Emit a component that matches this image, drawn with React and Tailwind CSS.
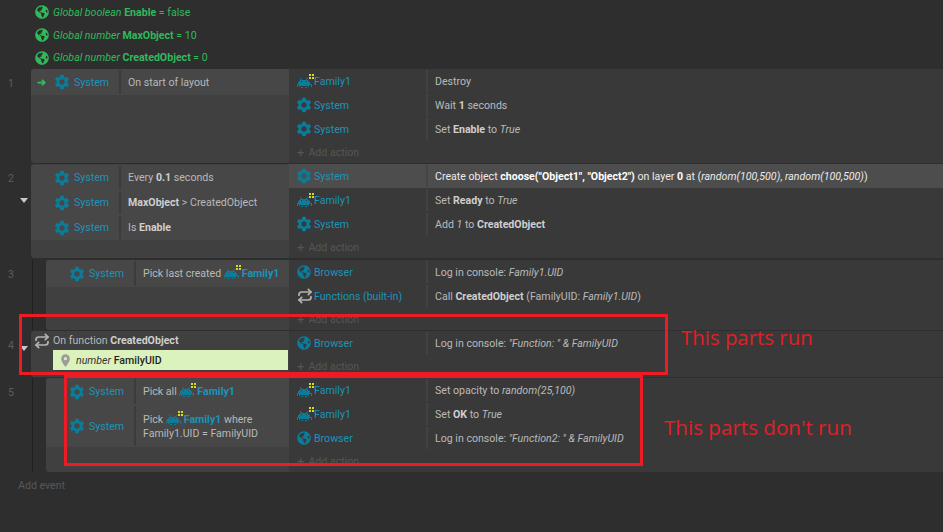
import React from "react";
import { MdSettings, MdPlace } from "react-icons/md";
import { FaGlobeAmericas } from "react-icons/fa";
import { Repeat } from "lucide-react";

const Gear = () => <MdSettings className="w-[18px] h-[18px] -ml-[2px] text-[#0b7c99] shrink-0" />;
const Globe = ({ cls = "text-[#0b7c99]" }) => <FaGlobeAmericas className={"w-[14px] h-[14px] shrink-0 " + cls} />;
const Loop = ({ cls = "w-[16px] h-[16px] text-[#b4b4b4]" }) => <Repeat strokeWidth={2.6} className={"shrink-0 " + cls} />;

const Invader = () => (
  <svg width="17" height="14" viewBox="0 0 17 14" className="shrink-0" shapeRendering="crispEdges">
    <g fill="#0b7c99">
      <rect x="3" y="4" width="1" height="1" />
      <rect x="10" y="4" width="1" height="1" />
      <rect x="4" y="5" width="1" height="1" />
      <rect x="9" y="5" width="1" height="1" />
      <rect x="3" y="6" width="8" height="1" />
      <rect x="2" y="7" width="2" height="1" />
      <rect x="5" y="7" width="4" height="1" />
      <rect x="10" y="7" width="2" height="1" />
      <rect x="1" y="8" width="12" height="2" />
      <rect x="0" y="10" width="15" height="1" />
      <rect x="0" y="11" width="1" height="2" />
      <rect x="2" y="11" width="10" height="1" />
      <rect x="14" y="11" width="1" height="2" />
      <rect x="2" y="12" width="1" height="1" />
      <rect x="11" y="12" width="1" height="1" />
      <rect x="4" y="13" width="2" height="1" />
      <rect x="8" y="13" width="2" height="1" />
    </g>
    <g fill="#d6dc1e">
      <rect x="12" y="0" width="2" height="2" />
      <rect x="15" y="0" width="2" height="2" />
      <rect x="12" y="3" width="2" height="2" />
      <rect x="15" y="3" width="2" height="2" />
    </g>
  </svg>
);

const Obj = ({ name }) => <span className="text-[#1a94bb] pt-px">{name}</span>;
const FamilyInline = () => (
  <span className="inline-flex items-center gap-[1px] align-[-2px] font-bold text-[#1a94bb]">
    <span className="-mt-[4px]"><Invader /></span>
    <span>Family1</span>
  </span>
);

const B = ({ children }) => <b className="font-bold text-[#cfcfcf]">{children}</b>;
const I = ({ children }) => <i className="italic">{children}</i>;

const Global = ({ kind, name, value }) => (
  <div className="flex-1 flex items-center pl-[35px] gap-[4px] text-[#2fba5b]">
    <Globe cls="text-[#2fba5b]" />
    <span className="whitespace-pre pt-px">
      <i className="italic">Global {kind} </i>
      <b className="font-bold">{name}</b> = {value}
    </span>
  </div>
);

const Action = ({ icon, name, children, hi }) => (
  <div className={"h-6 flex items-center " + (hi ? "bg-[#4d4d4d] text-[#ececec]" : "")}>
    <div className="w-[137px] flex items-center pl-2 gap-[1px] shrink-0">
      <span className="w-[16px] flex items-center shrink-0">{icon}</span>
      <Obj name={name} />
    </div>
    <div className={"h-[22px] w-[2px] shrink-0 " + (hi ? "bg-[#444]" : "bg-[#424242]")} />
    <div className="pl-[7px] pt-px whitespace-pre">{children}</div>
  </div>
);

const AddAction = () => (
  <div className="h-[22px] flex items-center pl-2 text-[#565656] gap-[4px]">
    <span className="text-[13px] leading-none">+</span>
    <span className="pt-px">Add action</span>
  </div>
);

const Cond = ({ first, system = "System", h = 25, children }) => (
  <div className="flex items-center bg-[#474747]" style={{ height: h }}>
    <div className="w-[88px] shrink-0 flex items-center relative pl-6 gap-[3px]">
      {first && <span className="absolute left-[6px] top-1/2 -translate-y-1/2 text-[#2fba5b] text-[11px] leading-none font-bold">➜</span>}
      <Gear />
      <Obj name={system} />
    </div>
    <div className="w-[2px] shrink-0 bg-[#3b3b3b]" style={{ height: h - 2 }} />
    <div className="pl-[7px] pt-px leading-[14px] whitespace-pre">{children}</div>
  </div>
);

const Event = ({ num, sub, tri, conds, actions }) => (
  <div className="flex">
    <div className={"relative shrink-0 " + (sub ? "w-[46px]" : "w-[31px]")}>
      <span className="absolute left-[8px] top-[8px] text-[#5c5c5c]">{num}</span>
      {sub && <div className="absolute left-[32px] top-0 bottom-0 w-px bg-[#202020]" />}
      {tri && (
        <div
          className="absolute left-[20px] w-0 h-0 border-l-[4px] border-r-[4px] border-t-[5px] border-l-transparent border-r-transparent border-t-[#c8c8c8]"
          style={{ top: tri }}
        />
      )}
    </div>
    <div className="shrink-0 bg-[#404040] rounded-l-[3px] overflow-hidden" style={{ width: sub ? 243 : 258 }}>
      {conds}
    </div>
    <div className="flex-1 bg-[#393939]">
      {actions}
      <AddAction />
    </div>
  </div>
);

export default function App() {
  return (
    <div
      className="relative w-[943px] h-[532px] overflow-hidden bg-[#2e2e2e] text-[10.6px] leading-[14px] text-[#b9b9b9]"
      style={{ fontFamily: 'Roboto, "Open Sans", sans-serif' }}
    >
      <div className="h-[69px] pt-px flex flex-col">
        <Global kind="boolean" name="Enable" value="false" />
        <Global kind="number" name="MaxObject" value="10" />
        <Global kind="number" name="CreatedObject" value="0" />
      </div>

      <div className="flex flex-col gap-px">
        <Event
          num="1"
          conds={<Cond first h={26}>On start of layout</Cond>}
          actions={
            <>
              <Action icon={<Invader />} name="Family1">Destroy</Action>
              <Action icon={<Gear />} name="System">Wait <B>1</B> seconds</Action>
              <Action icon={<Gear />} name="System">Set <B>Enable</B> to <I>True</I></Action>
            </>
          }
        />
        <Event
          num="2"
          tri={34}
          conds={
            <div className="pt-px">
              <Cond>Every <B>0.1</B> seconds</Cond>
              <Cond><B>MaxObject</B> &gt; CreatedObject</Cond>
              <Cond>Is <B>Enable</B></Cond>
            </div>
          }
          actions={
            <>
              <Action hi icon={<Gear />} name="System">Create object <b className="font-bold text-white">choose("Object1", "Object2")</b> on layer <b className="font-bold text-white">0</b> at (<I>random(100,500)</I>, <I>random(100,500)</I>)</Action>
              <Action icon={<Invader />} name="Family1">Set <B>Ready</B> to <I>True</I></Action>
              <Action icon={<Gear />} name="System">Add <I>1</I> to <B>CreatedObject</B></Action>
            </>
          }
        />
        <div className="mt-px">
          <Event
            num="3"
            sub
            conds={<Cond h={27}>Pick last created <FamilyInline /></Cond>}
            actions={
              <>
                <Action icon={<Globe />} name="Browser">Log in console: <I>Family1.UID</I></Action>
                <Action icon={<Loop />} name="Functions (built-in)">Call <B>CreatedObject</B> (FamilyUID: <I>Family1.UID</I>)</Action>
              </>
            }
          />
        </div>
        <Event
          num="4"
          tri={15}
          conds={
            <div className="h-full flex flex-col">
              <div className="h-[19px] flex items-center pl-[3px] gap-[3px]">
                <Loop />
                <span className="pt-px">On function <B>CreatedObject</B></span>
              </div>
              <div className="ml-[22px] mr-px h-5 bg-[#dcf2bc] flex items-center pl-[6px] gap-[3px] text-[#1f1f1f]">
                <MdPlace className="w-[15px] h-[15px] text-[#9c9c9c] -ml-[1px]" />
                <span className="pt-px"><i className="italic text-[#333]">number</i> <span className="font-medium">FamilyUID</span></span>
              </div>
            </div>
          }
          actions={<Action icon={<Globe />} name="Browser">Log in console: <I>"Function: " &amp; FamilyUID</I></Action>}
        />
        <Event
          num="5"
          sub
          conds={
            <>
              <Cond h={27}>Pick all <FamilyInline /></Cond>
              <Cond h={42}>
                <div>Pick <FamilyInline /> where</div>
                <div>Family1.UID = FamilyUID</div>
              </Cond>
            </>
          }
          actions={
            <>
              <Action icon={<Invader />} name="Family1">Set opacity to <I>random(25,100)</I></Action>
              <Action icon={<Invader />} name="Family1">Set <B>OK</B> to <I>True</I></Action>
              <Action icon={<Globe />} name="Browser">Log in console: <I>"Function2: " &amp; FamilyUID</I></Action>
            </>
          }
        />
      </div>

      <div className="pl-[18px] pt-[7px] text-[#585858]">Add event</div>

      <div className="absolute left-[19px] top-[314px] w-[649px] h-[61px] border-[3px] border-[#ed1c24]" />
      <div className="absolute left-[64px] top-[375px] w-[579px] h-[91px] border-[3px] border-[#ed1c24]" />
      <div
        className="absolute left-[681px] top-[323px] text-[20.4px] leading-[28px] text-[#e01f27]"
        style={{ fontFamily: '"Open Sans", sans-serif' }}
      >
        This parts run
      </div>
      <div
        className="absolute left-[664px] top-[413px] text-[20.6px] leading-[28px] text-[#e01f27]"
        style={{ fontFamily: '"Open Sans", sans-serif' }}
      >
        This parts don't run
      </div>
    </div>
  );
}
